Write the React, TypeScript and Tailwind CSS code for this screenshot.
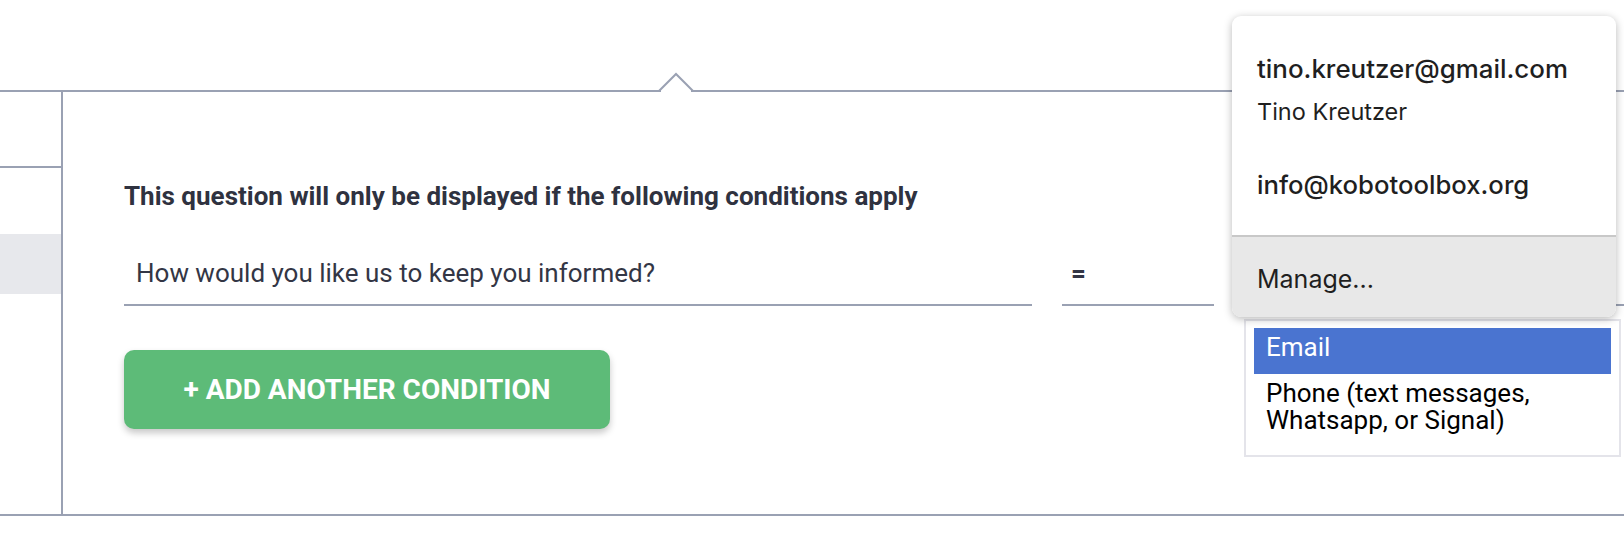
import React from "react";

export default function App() {
  return (
    <div className="relative w-[1624px] h-[550px] overflow-hidden bg-white font-['Roboto',sans-serif]">
      <div className="h-[90px]" />
      <div className="relative flex h-[426px] border-y-2 border-[#9aa1b3]">
        <svg
          className="absolute left-[657px] -top-[20px]"
          width="38"
          height="22"
          viewBox="0 0 38 22"
        >
          <rect x="4" y="18" width="30" height="3" fill="#ffffff" />
          <polyline
            points="2,19 19,2 36,19"
            fill="none"
            stroke="#9aa1b3"
            strokeWidth="2"
          />
        </svg>
        <aside className="flex w-[63px] shrink-0 flex-col border-r-2 border-[#9aa1b3]">
          <div className="h-[76px] border-b-2 border-[#9aa1b3]" />
          <div className="h-[66px]" />
          <div className="h-[60px] bg-[#e7e8ec]" />
        </aside>
        <main className="flex flex-1 flex-col pl-[61px] pt-[89px]">
          <h2 className="text-[26px] font-bold leading-[30px] text-[#2f3240]">
            This question will only be displayed if the following conditions apply
          </h2>
          <div className="mt-[47px] flex gap-[30px]">
            <div className="w-[908px] border-b-2 border-[#9aa1b3] pb-[16px] pl-[12px] text-[26px] leading-[30px] text-[#333645]">
              How would you like us to keep you informed?
            </div>
            <div className="w-[152px] border-b-2 border-[#9aa1b3] pb-[16px] pl-[9px] text-[26px] font-bold leading-[30px] text-[#333645]">
              =
            </div>
            <div className="flex-1 border-b-2 border-[#9aa1b3] pb-[16px] text-[26px] leading-[30px]">
              &nbsp;
            </div>
          </div>
          <button className="mt-[44px] flex h-[79px] w-[486px] items-center justify-center rounded-[10px] bg-[#5dbb78] text-[28px] font-bold uppercase text-white shadow-[0_4px_7px_rgba(0,0,0,0.22)]">
            + Add another condition
          </button>
        </main>
      </div>

      {/* native select listbox */}
      <div className="absolute left-[1244px] top-[319px] h-[138px] w-[377px] border-2 border-[#e4e4ea] bg-white px-[8px] pt-[7px] font-['Roboto',sans-serif] text-[26px]">
        <div className="h-[46px] bg-[#4a74d0] pl-[12px] pt-[5px] leading-[28px] text-white">
          Email
        </div>
        <div className="mt-[6px] pl-[12px] pr-[20px] leading-[27px] text-black">
          Phone (text messages, Whatsapp, or Signal)
        </div>
      </div>

      {/* autofill popup */}
      <div className="absolute left-[1232px] top-[16px] flex h-[301px] w-[384px] flex-col overflow-hidden rounded-[9px] bg-white font-['Inter',sans-serif] text-[#1f1f1f] shadow-[0_2px_8px_rgba(0,0,0,0.28)]">
        <div className="pl-[25px] pt-[37px]">
          <div className="text-[25.9px] font-medium leading-[31px]">tino.kreutzer@gmail.com</div>
          <div className="mt-[13px] text-[23.5px] leading-[29px]">Tino Kreutzer</div>
          <div className="mt-[43px] text-[25.7px] font-medium leading-[31px]">info@kobotoolbox.org</div>
        </div>
        <div className="mt-[35px] flex flex-1 flex-col border-t-2 border-[#c8c8c8] bg-[#e8e8e8] pl-[25px] pt-[27px]">
          <div className="text-[25px] leading-[31px]">Manage...</div>
        </div>
      </div>
    </div>
  );
}
